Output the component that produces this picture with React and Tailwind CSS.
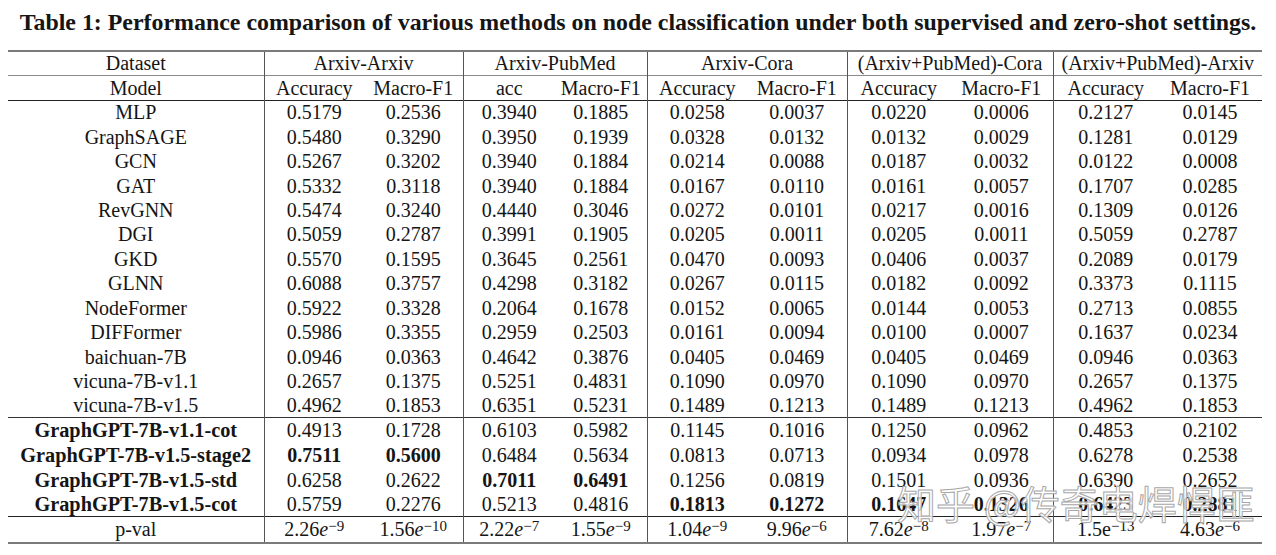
const groups = [
  { name: "Arxiv-Arxiv", cols: ["Accuracy", "Macro-F1"], w: [100, 99] },
  { name: "Arxiv-PubMed", cols: ["acc", "Macro-F1"], w: [92, 92] },
  { name: "Arxiv-Cora", cols: ["Accuracy", "Macro-F1"], w: [100, 100] },
  { name: "(Arxiv+PubMed)-Cora", cols: ["Accuracy", "Macro-F1"], w: [103, 103] },
  { name: "(Arxiv+PubMed)-Arxiv", cols: ["Accuracy", "Macro-F1"], w: [105, 104] },
];

const baselines = [
  ["MLP", "0.5179", "0.2536", "0.3940", "0.1885", "0.0258", "0.0037", "0.0220", "0.0006", "0.2127", "0.0145"],
  ["GraphSAGE", "0.5480", "0.3290", "0.3950", "0.1939", "0.0328", "0.0132", "0.0132", "0.0029", "0.1281", "0.0129"],
  ["GCN", "0.5267", "0.3202", "0.3940", "0.1884", "0.0214", "0.0088", "0.0187", "0.0032", "0.0122", "0.0008"],
  ["GAT", "0.5332", "0.3118", "0.3940", "0.1884", "0.0167", "0.0110", "0.0161", "0.0057", "0.1707", "0.0285"],
  ["RevGNN", "0.5474", "0.3240", "0.4440", "0.3046", "0.0272", "0.0101", "0.0217", "0.0016", "0.1309", "0.0126"],
  ["DGI", "0.5059", "0.2787", "0.3991", "0.1905", "0.0205", "0.0011", "0.0205", "0.0011", "0.5059", "0.2787"],
  ["GKD", "0.5570", "0.1595", "0.3645", "0.2561", "0.0470", "0.0093", "0.0406", "0.0037", "0.2089", "0.0179"],
  ["GLNN", "0.6088", "0.3757", "0.4298", "0.3182", "0.0267", "0.0115", "0.0182", "0.0092", "0.3373", "0.1115"],
  ["NodeFormer", "0.5922", "0.3328", "0.2064", "0.1678", "0.0152", "0.0065", "0.0144", "0.0053", "0.2713", "0.0855"],
  ["DIFFormer", "0.5986", "0.3355", "0.2959", "0.2503", "0.0161", "0.0094", "0.0100", "0.0007", "0.1637", "0.0234"],
  ["baichuan-7B", "0.0946", "0.0363", "0.4642", "0.3876", "0.0405", "0.0469", "0.0405", "0.0469", "0.0946", "0.0363"],
  ["vicuna-7B-v1.1", "0.2657", "0.1375", "0.5251", "0.4831", "0.1090", "0.0970", "0.1090", "0.0970", "0.2657", "0.1375"],
  ["vicuna-7B-v1.5", "0.4962", "0.1853", "0.6351", "0.5231", "0.1489", "0.1213", "0.1489", "0.1213", "0.4962", "0.1853"],
];

// "*" prefix = bold value
const ours = [
  ["GraphGPT-7B-v1.1-cot", "0.4913", "0.1728", "0.6103", "0.5982", "0.1145", "0.1016", "0.1250", "0.0962", "0.4853", "0.2102"],
  ["GraphGPT-7B-v1.5-stage2", "*0.7511", "*0.5600", "0.6484", "0.5634", "0.0813", "0.0713", "0.0934", "0.0978", "0.6278", "0.2538"],
  ["GraphGPT-7B-v1.5-std", "0.6258", "0.2622", "*0.7011", "*0.6491", "0.1256", "0.0819", "0.1501", "0.0936", "0.6390", "0.2652"],
  ["GraphGPT-7B-v1.5-cot", "0.5759", "0.2276", "0.5213", "0.4816", "*0.1813", "*0.1272", "*0.1647", "*0.1326", "*0.6423", "*0.2881"],
];

const pvals = [
  ["2.26", "-9"], ["1.56", "-10"], ["2.22", "-7"], ["1.55", "-9"], ["1.04", "-9"],
  ["9.96", "-6"], ["7.62", "-8"], ["1.97", "-7"], ["1.5", "-13", true], ["4.63", "-6"],
];

// right border after every second value column
const sep = (i) => (i % 2 === 1 && i < 9 ? "border-r border-[#555]" : "");

function Row({ row, bold, h }) {
  return (
    <tr className={h}>
      <td className={`border-r border-[#555] p-0 ${bold ? "font-bold text-[20.3px]" : ""}`}>{row[0]}</td>
      {row.slice(1).map((v, i) => {
        const b = v.startsWith("*");
        return (
          <td key={i} className={`p-0 ${sep(i)} ${b ? "font-bold" : ""}`}>
            {b ? v.slice(1) : v}
          </td>
        );
      })}
    </tr>
  );
}

export default function App() {
  return (
    <div className="w-[1276px] h-[555px] bg-white text-[#151515] font-['Liberation_Serif',serif] overflow-hidden">
      <div className="h-[50px] pt-[7px] text-center font-bold text-[23.9px] leading-[30px] whitespace-nowrap">
        Table 1: Performance comparison of various methods on node classification under both supervised and zero-shot settings.
      </div>
      <div className="relative px-[8px]">
        <table className="w-[1254px] table-fixed border-collapse text-center text-[20px] leading-[22px]">
          <colgroup>
            <col className="w-[256px]" />
            {groups.flatMap((g) => g.w.map((w, j) => <col key={g.name + j} style={{ width: w }} />))}
          </colgroup>
          <thead>
            <tr className="h-[24px] border-t-2 border-[#7a7a7a] border-b border-b-[#8a8a8a]">
              <td className="border-r border-[#555] p-0">Dataset</td>
              {groups.map((g, i) => (
                <td key={g.name} colSpan={2} className={`p-0 ${i < 4 ? "border-r border-[#555]" : ""}`}>
                  {g.name}
                </td>
              ))}
            </tr>
            <tr className="h-[25px] border-b border-[#222]">
              <td className="border-r border-[#555] p-0">Model</td>
              {groups.flatMap((g) => g.cols).map((c, i) => (
                <td key={i} className={`p-0 ${sep(i)}`}>
                  {c}
                </td>
              ))}
            </tr>
          </thead>
          <tbody>
            {baselines.map((r) => (
              <Row key={r[0]} row={r} h="h-[24.45px]" />
            ))}
            <tr className="border-t border-[#333]"></tr>
            {ours.map((r) => (
              <Row key={r[0]} row={r} bold h="h-[24.75px]" />
            ))}
            <tr className="h-[26px] border-t border-[#222] border-b-2 border-b-[#7a7a7a]">
              <td className="border-r border-[#555] p-0">p-val</td>
              {pvals.map(([m, e, plain], i) => (
                <td key={i} className={`p-0 ${sep(i)}`}>
                  {m}
                  <span className={plain ? "" : "italic"}>e</span>
                  <sup className="text-[15px] relative -top-[5px]">{e.replace("-", "\u2212")}</sup>
                </td>
              ))}
            </tr>
          </tbody>
        </table>
        {/* zhihu watermark */}
        <div className="absolute left-[897px] top-[433px] text-[39px] leading-none whitespace-nowrap font-['Noto_Sans_CJK_SC',sans-serif] text-white/80 [-webkit-text-stroke:1px_#a8a8a8] pointer-events-none">
          知乎 @传奇电焊悍匪
        </div>
      </div>
    </div>
  );
}
